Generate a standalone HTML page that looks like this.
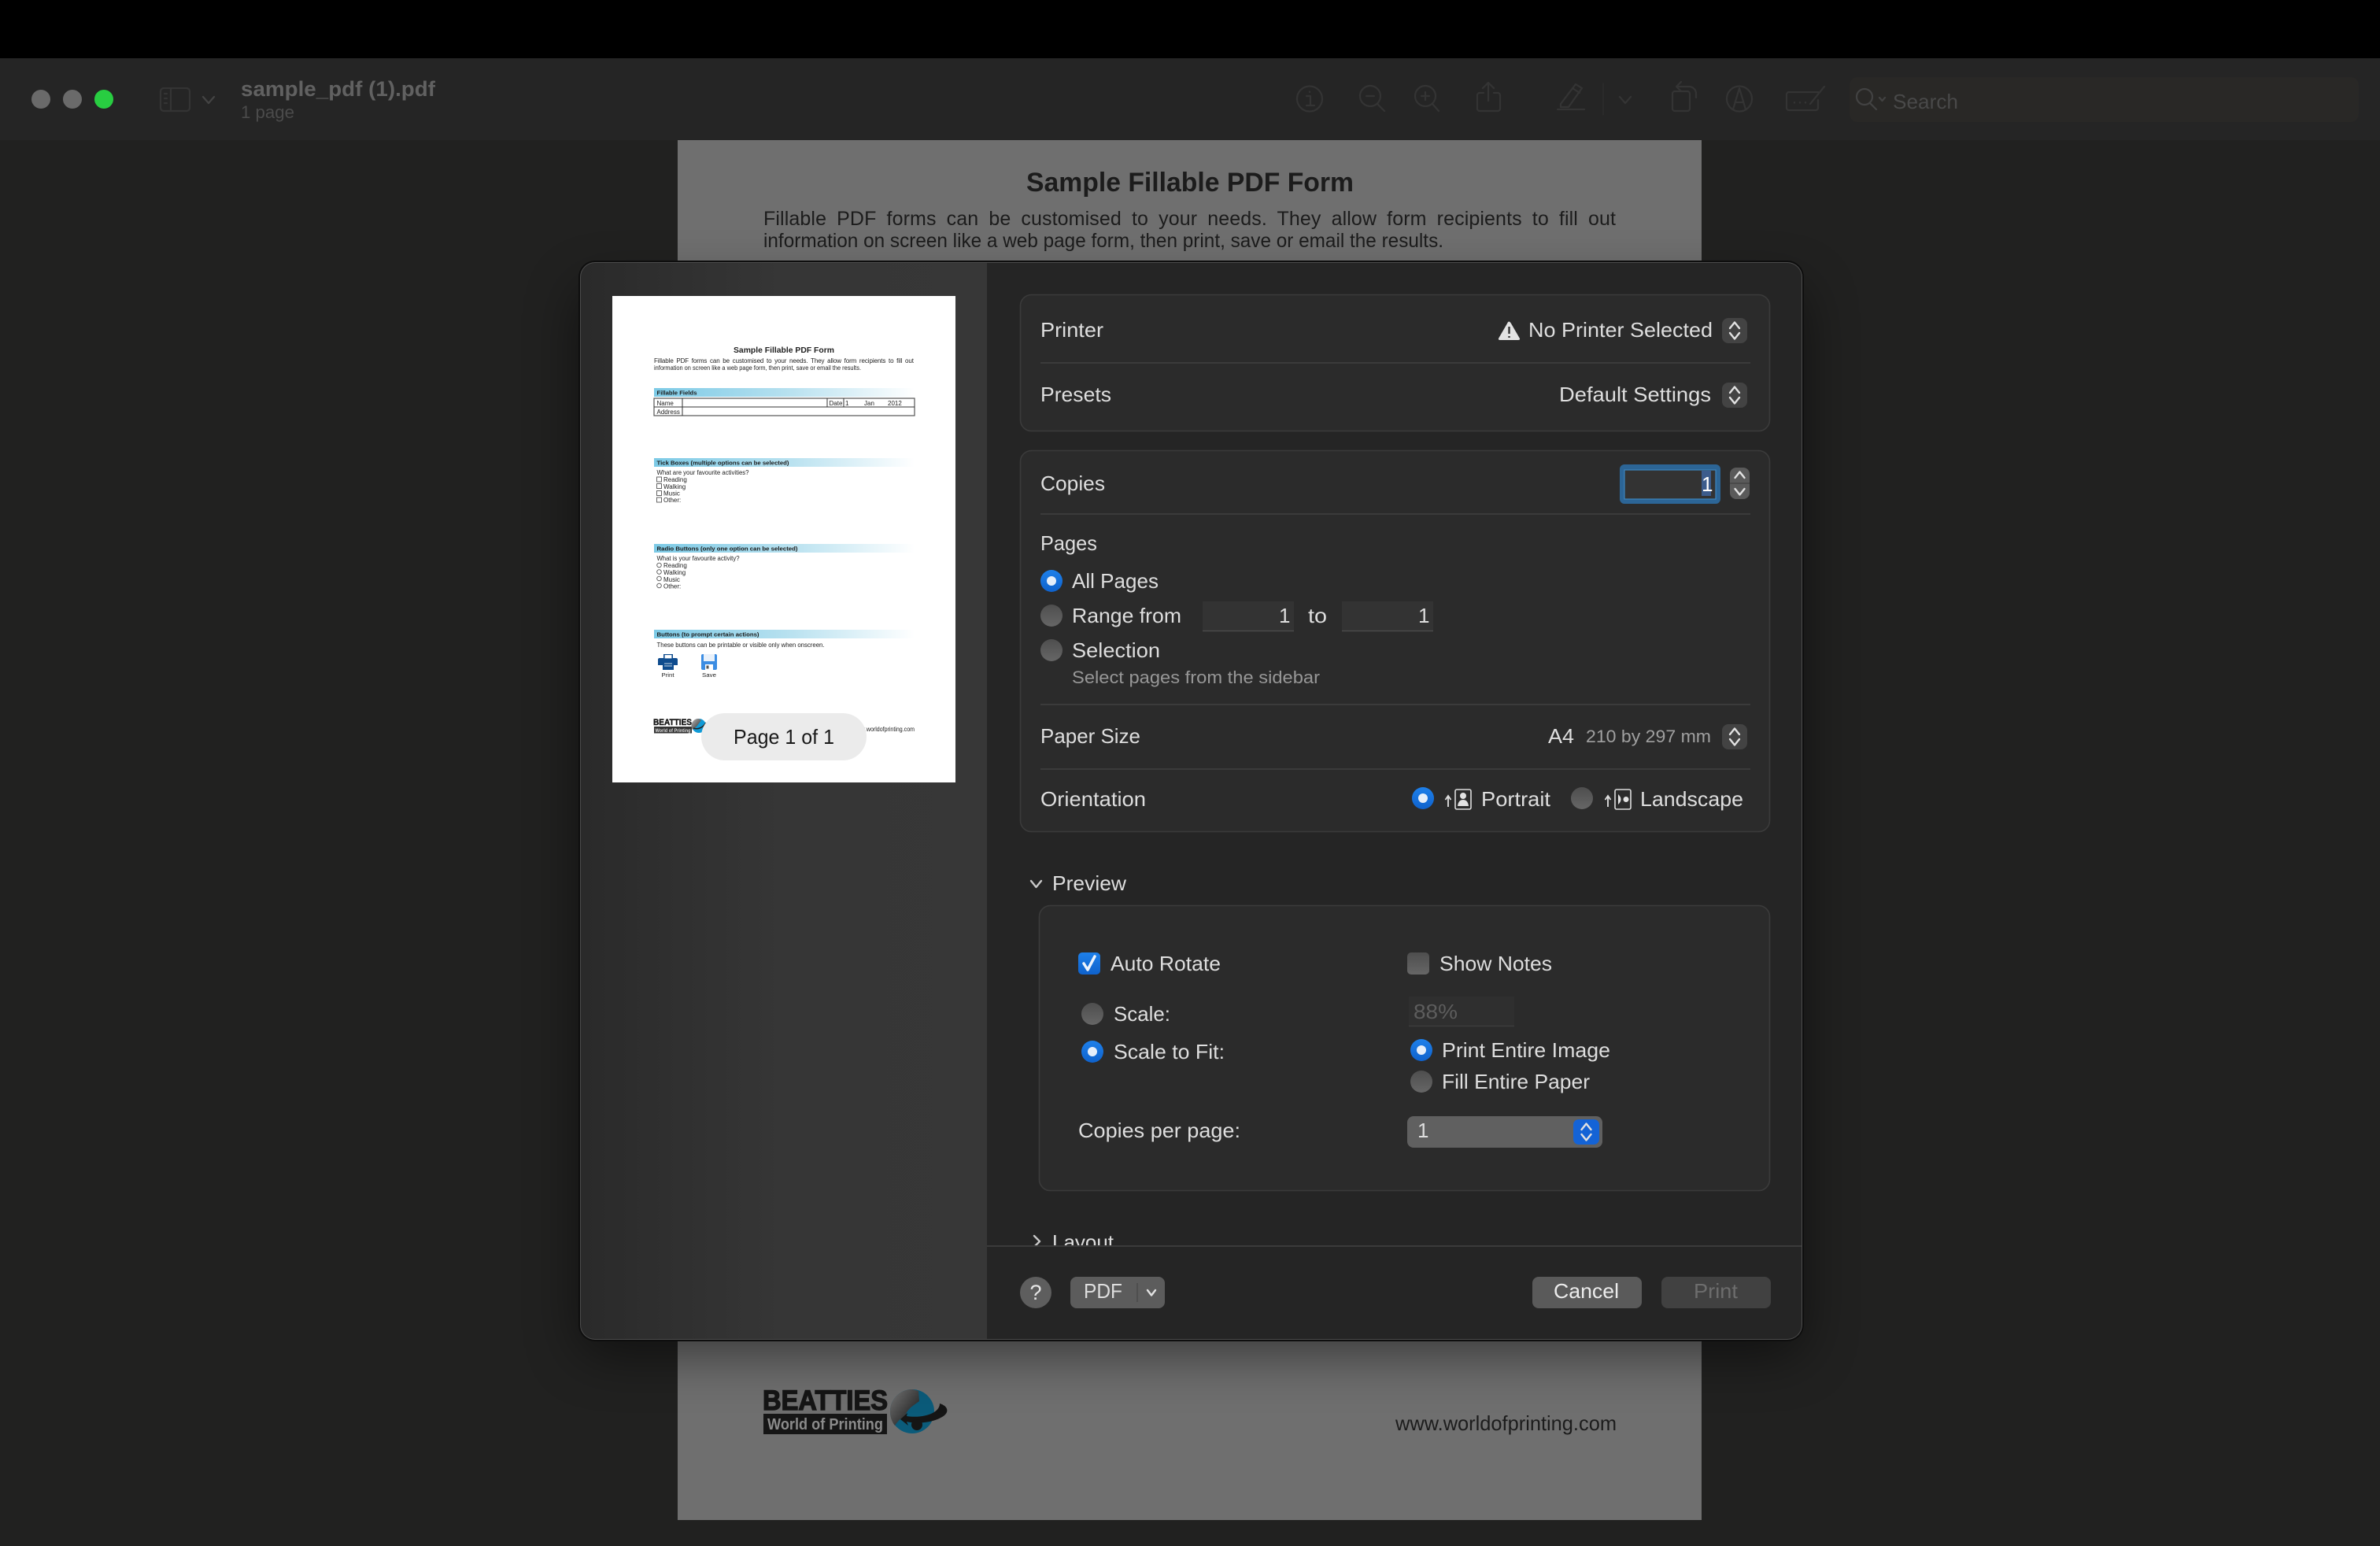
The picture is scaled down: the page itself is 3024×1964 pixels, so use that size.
<!DOCTYPE html>
<html><head><meta charset="utf-8"><title>Print</title>
<style>
html,body{margin:0;padding:0;background:#212120;width:3024px;height:1964px;overflow:hidden}
svg{display:block}
text{font-family:"Liberation Sans",sans-serif;fill:#dedede;font-size:26px}
.g{fill:#979797;font-size:22px}
.p{fill:#1c1c1c}
.m{fill:#222;font-size:8px}
.b{font-weight:bold;fill:#1c1c1c;font-size:7.6px}
.ic{fill:none;stroke:#343434;stroke-width:2.2;stroke-linecap:round;stroke-linejoin:round}
.ch{fill:none;stroke:#e2e2e2;stroke-width:2.4;stroke-linecap:round;stroke-linejoin:round}
.f{fill:#333;stroke:none}
</style></head><body>
<svg width="3024" height="1964" viewBox="0 0 3024 1964" xmlns="http://www.w3.org/2000/svg">
<defs>
<linearGradient id="sb" x1="0" x2="1" y1="0" y2="0"><stop offset="0" stop-color="#2a2a2a"/><stop offset=".25" stop-color="#303030"/><stop offset=".5" stop-color="#363636"/><stop offset="1" stop-color="#373737"/></linearGradient>
<linearGradient id="sec" x1="0" x2="1" y1="0" y2="0"><stop offset="0" stop-color="#7ccae6"/><stop offset=".5" stop-color="#b5e0ef"/><stop offset="1" stop-color="#fff"/></linearGradient>
<linearGradient id="rb" x1="0" x2="0" y1="0" y2="1"><stop offset="0" stop-color="#1e80ea"/><stop offset="1" stop-color="#0f62cc"/></linearGradient>
<linearGradient id="rg" x1="0" x2="0" y1="0" y2="1"><stop offset="0" stop-color="#4e4e4e"/><stop offset="1" stop-color="#666"/></linearGradient>
<linearGradient id="gl" x1="0" x2="1" y1="0" y2="1"><stop offset="0" stop-color="#bbb"/><stop offset="1" stop-color="#222"/></linearGradient>
<linearGradient id="gd" x1="0" x2="1" y1="0" y2="1"><stop offset="0" stop-color="#777"/><stop offset="1" stop-color="#111"/></linearGradient>
<filter id="sh" x="-20%" y="-20%" width="140%" height="140%"><feGaussianBlur stdDeviation="34"/></filter>
<clipPath id="cl"><rect x="1254" y="340" width="1030" height="1243"/></clipPath>
<clipPath id="dc"><rect x="738" y="334" width="1551" height="1367" rx="18"/></clipPath>
<g id="st"><path class="ch" d="M-6,-3 L0,-10.500 L6,-3"/><path class="ch" d="M-6,3 L0,10.500 L6,3"/></g>
<g id="ron"><circle r="14" fill="url(#rb)"/><circle r="6" fill="#e6effa"/></g>
<g id="rof"><circle r="14" fill="url(#rg)"/></g>
</defs>

<rect width="3024" height="1964" fill="#212120"/>
<rect width="3024" height="74" fill="#000"/>
<rect y="74" width="3024" height="104" fill="#252525"/>

<!-- traffic lights -->
<circle cx="52" cy="126" r="12" fill="#6a6a6a"/>
<circle cx="92" cy="126" r="12" fill="#6a6a6a"/>
<circle cx="132" cy="126" r="12" fill="#28cd41"/>
<!-- sidebar icon -->
<g class="ic"><rect x="204" y="112" width="37" height="29" rx="4"/><path d="M217,112V141M209,119H212M209,125H212M209,131H212"/><path d="M258,123L265,131L272,123" style="stroke:#444"/></g>
<text x="306" y="122" font-weight="bold" textLength="247" lengthAdjust="spacingAndGlyphs" style="fill:#616161;font-size:27px">sample_pdf (1).pdf</text>
<text x="306" y="150" textLength="68" lengthAdjust="spacingAndGlyphs" style="fill:#4b4b4b;font-size:22px">1 page</text>

<!-- toolbar icons -->
<g class="ic">
<circle cx="1664" cy="125.5" r="16"/><path d="M1660,122H1665V134M1660,134H1670M1664,116.500V117"/>
<circle cx="1741" cy="122" r="13"/><path d="M1750,132L1759,141M1736,122H1746"/>
<circle cx="1811" cy="122" r="13"/><path d="M1820,132L1828,141M1806,122H1816M1811,117V127"/>
<path d="M1885,118H1880A3,3 0 0 0 1877,121V138A3,3 0 0 0 1880,141H1903A3,3 0 0 0 1906,138V121A3,3 0 0 0 1903,118H1898M1891,128V106M1884,112L1891,105L1898,112"/>
<path d="M1983,132L2002,107L2010,112L1993,136L1983,136ZM1998,112L2007,118"/><path d="M1979,139H2013"/>
<path d="M2037,106V146" stroke-width="1.2" style="stroke:#2e2e2e"/>
<path d="M2058,123L2065,131L2072,123"/>
<rect x="2125" y="116" width="22" height="25" rx="3"/><path d="M2130,110H2146A9,9 0 0 1 2155,119V124M2136,104L2130,110L2136,116"/>
<circle cx="2210" cy="125.5" r="16"/><path d="M2202,139L2210,112L2218,139M2205,130H2215"/>
<path d="M2310,117H2273A3,3 0 0 0 2270,120V137A3,3 0 0 0 2273,140H2307A3,3 0 0 0 2310,137V127M2280,130V130.500M2287,130V130.500M2294,130V130.500M2300,132L2318,110"/>
</g>
<rect x="2350" y="98" width="647" height="57" rx="10" fill="#292826"/>
<g class="ic" style="stroke:#424242"><circle cx="2369" cy="123" r="10"/><path d="M2376,131L2384,139M2388,124L2391.500,128L2395,124"/></g>
<text x="2405" y="138" textLength="83" lengthAdjust="spacingAndGlyphs" style="fill:#494949;font-size:26px">Search</text>

<!-- background PDF page -->
<rect x="861" y="178" width="1301" height="1753" fill="#6f6f6f"/>
<text x="1304" y="243" font-weight="bold" textLength="416" lengthAdjust="spacingAndGlyphs" class="p" style="font-size:34px">Sample Fillable PDF Form</text>
<text x="970" y="286" textLength="1083" class="p" style="font-size:25px;word-spacing:6px">Fillable PDF forms can be customised to your needs. They allow form recipients to fill out</text>
<text x="970" y="314" textLength="864" lengthAdjust="spacingAndGlyphs" class="p" style="font-size:25px">information on screen like a web page form, then print, save or email the results.</text>
<!-- logo large -->
<text x="969" y="1791" font-weight="bold" textLength="159" lengthAdjust="spacingAndGlyphs" style="fill:#151515;font-size:35px;stroke:#151515;stroke-width:1.4">BEATTIES</text>
<rect x="970" y="1796" width="157" height="26" fill="#161616"/>
<text x="975" y="1816" font-weight="bold" textLength="147" lengthAdjust="spacingAndGlyphs" style="fill:#8b8b8b;font-size:20px">World of Printing</text>
<circle cx="1159" cy="1793" r="28" fill="#0b5b7a"/>
<path d="M1159,1765A28,28 0 0 0 1131,1793C1131,1800 1133,1806 1137,1811C1140,1806 1146,1800 1150,1800C1152,1790 1160,1786 1168,1780L1167,1767Z" fill="url(#gd)"/>
<path d="M1144,1803L1153,1795L1152,1799C1172,1802 1194,1796 1194,1783C1204,1786 1206,1793 1200,1798C1190,1806 1168,1810 1152,1806L1154,1811Z" fill="#151515"/>
<circle cx="1165" cy="1810" r="7" fill="#151515"/>
<text x="1773" y="1817" textLength="281" lengthAdjust="spacingAndGlyphs" class="p" style="font-size:26px">www.worldofprinting.com</text>

<!-- dialog shadow -->
<rect x="737" y="367" width="1553" height="1353" rx="20" fill="#000" opacity=".5" filter="url(#sh)"/>
<rect x="735" y="331" width="1557" height="1373" rx="21" fill="#0e0e0e"/>
<rect x="737" y="333" width="1553" height="1369" rx="19" fill="#4c4c4c"/>
<g clip-path="url(#dc)">
<rect x="738" y="334" width="516" height="1367" fill="url(#sb)"/>
<rect x="1254" y="334" width="1036" height="1367" fill="#252525"/>
</g>

<!-- sidebar preview page -->
<rect x="778" y="376" width="436" height="618" fill="#fff"/>
<text x="932" y="448" font-weight="bold" textLength="128" lengthAdjust="spacingAndGlyphs" style="fill:#222;font-size:10.500px">Sample Fillable PDF Form</text>
<text x="831" y="461" textLength="330" class="m" style="word-spacing:1.500px">Fillable PDF forms can be customised to your needs. They allow form recipients to fill out</text>
<text x="831" y="470" textLength="263" lengthAdjust="spacingAndGlyphs" class="m">information on screen like a web page form, then print, save or email the results.</text>

<rect x="831" y="493" width="331" height="11" fill="url(#sec)"/>
<text x="834.500" y="501.500" textLength="51" lengthAdjust="spacingAndGlyphs" class="b">Fillable Fields</text>
<rect x="831" y="506" width="331" height="22" fill="#fff" stroke="#555" stroke-width="1.2"/>
<path d="M831,517H1162M867,506V528M1051,506V517M1072,506V517" stroke="#333" stroke-width="1" fill="none"/>
<g class="m" style="font-size:8px">
<text x="834.500" y="515" class="m">Name</text><text x="834.500" y="526" class="m">Address</text>
<text x="1053.500" y="515" class="m">Date</text><text x="1074" y="515" class="m">1</text><text x="1098" y="515" class="m">Jan</text><text x="1128" y="515" class="m">2012</text>
</g>

<rect x="831" y="582" width="331" height="11" fill="url(#sec)"/>
<text x="834.500" y="590.500" textLength="168" lengthAdjust="spacingAndGlyphs" class="b">Tick Boxes (multiple options can be selected)</text>
<text x="834.500" y="603" textLength="117" lengthAdjust="spacingAndGlyphs" class="m">What are your favourite activities?</text>
<g fill="none" stroke="#555" stroke-width=".9"><rect x="834.500" y="606" width="6" height="6"/><rect x="834.500" y="614.500" width="6" height="6"/><rect x="834.500" y="623.500" width="6" height="6"/><rect x="834.500" y="632" width="6" height="6"/></g>
<text x="843" y="612" class="m">Reading</text><text x="843" y="621" class="m">Walking</text><text x="843" y="629.500" class="m">Music</text><text x="843" y="638" class="m">Other:</text>

<rect x="831" y="691" width="331" height="11" fill="url(#sec)"/>
<text x="834.500" y="699.500" textLength="179" lengthAdjust="spacingAndGlyphs" class="b">Radio Buttons (only one option can be selected)</text>
<text x="834.500" y="712" textLength="105" lengthAdjust="spacingAndGlyphs" class="m">What is your favourite activity?</text>
<g fill="none" stroke="#555" stroke-width=".9"><circle cx="837.500" cy="718" r="2.800"/><circle cx="837.500" cy="726.500" r="2.800"/><circle cx="837.500" cy="735" r="2.800"/><circle cx="837.500" cy="744" r="2.800"/></g>
<text x="843" y="721" class="m">Reading</text><text x="843" y="730" class="m">Walking</text><text x="843" y="739" class="m">Music</text><text x="843" y="747.500" class="m">Other:</text>

<rect x="831" y="800" width="331" height="11" fill="url(#sec)"/>
<text x="834.500" y="808.500" textLength="130" lengthAdjust="spacingAndGlyphs" class="b">Buttons (to prompt certain actions)</text>
<text x="834.500" y="822" textLength="213" lengthAdjust="spacingAndGlyphs" class="m">These buttons can be printable or visible only when onscreen.</text>
<path d="M843,836V831H855V836H859A2,2 0 0 1 861,838V845H856V851H842V845H836V838A2,2 0 0 1 838,836Z" fill="#0f4c8e"/>
<path d="M845,832.500H853V836H845ZM844,843H854M844,846H854" stroke="#fff" stroke-width=".8" fill="#fff"/>
<rect x="891" y="831" width="20" height="20" rx="2" fill="#3c8de3"/><rect x="894" y="831" width="14" height="9" fill="#e9f1fa"/><rect x="896" y="844" width="10" height="7" fill="#fff"/><rect x="897.500" y="845.500" width="3" height="4" fill="#555"/>
<text x="840.500" y="860" textLength="16" lengthAdjust="spacingAndGlyphs" class="m" style="font-size:7.500px">Print</text>
<text x="892" y="860" textLength="18" lengthAdjust="spacingAndGlyphs" class="m" style="font-size:7.500px">Save</text>

<text x="830" y="921" font-weight="bold" textLength="49" lengthAdjust="spacingAndGlyphs" style="fill:#151515;font-size:11px;stroke:#151515;stroke-width:.4">BEATTIES</text>
<rect x="831" y="923" width="48" height="8.500" fill="#333"/>
<text x="832.500" y="930" font-weight="bold" textLength="45" lengthAdjust="spacingAndGlyphs" style="fill:#ddd;font-size:6.500px">World of Printing</text>
<circle cx="888" cy="922" r="9" fill="#109ad6"/>
<path d="M888,913A9,9 0 0 0 880,927L885,923L891,915Z" fill="url(#gl)"/>
<path d="M881,925C886,927 893,925 897,918" stroke="#222" stroke-width="1.500" fill="none"/>
<text x="1084" y="929" textLength="78" lengthAdjust="spacingAndGlyphs" class="m">www.worldofprinting.com</text>
<rect x="891" y="906" width="210" height="60" rx="30" fill="#ebebeb"/>
<text x="932" y="945" textLength="128" lengthAdjust="spacingAndGlyphs" style="fill:#1a1a1a;font-size:26px">Page 1 of 1</text>

<!-- Box 1 -->
<rect x="1296.500" y="374.500" width="952" height="173" rx="14" fill="#2b2b2b" stroke="#3b3b3b" stroke-width="1.600"/>
<text x="1322" y="428" textLength="80" lengthAdjust="spacingAndGlyphs">Printer</text>
<path d="M1322,461H2224" stroke="#3b3b3b" stroke-width="2"/>
<path d="M1917.500,408.500Q1919,409 1920,411L1931,430Q1931.500,432 1929,432H1906Q1903.500,432 1904,430L1915,411Q1916,408.500 1917.500,408.500Z" fill="#e3e3e3"/>
<path d="M1917.500,415V424M1917.500,427V429" stroke="#2b2b2b" stroke-width="2.300"/>
<text x="1942" y="428" textLength="234" lengthAdjust="spacingAndGlyphs">No Printer Selected</text>
<rect x="2188" y="404" width="32" height="32" rx="8" fill="#434343"/><use href="#st" transform="translate(2204,420)"/>
<text x="1322" y="510" textLength="90" lengthAdjust="spacingAndGlyphs">Presets</text>
<text x="1981" y="510" textLength="193" lengthAdjust="spacingAndGlyphs">Default Settings</text>
<rect x="2188" y="486" width="32" height="32" rx="8" fill="#434343"/><use href="#st" transform="translate(2204,502)"/>

<!-- Box 2 -->
<rect x="1296.500" y="572.500" width="952" height="484" rx="14" fill="#2b2b2b" stroke="#3b3b3b" stroke-width="1.600"/>
<text x="1322" y="623" textLength="82" lengthAdjust="spacingAndGlyphs">Copies</text>
<rect x="2058" y="590" width="128" height="50" rx="6" fill="#2c6596"/>
<rect x="2064" y="597" width="116" height="37" fill="#333" stroke="#3d86bd" stroke-width="1.200"/>
<rect x="2162" y="598" width="12" height="32" fill="#3c5c8c"/>
<text x="2162" y="624" style="fill:#fff">1</text>
<rect x="2198" y="594" width="25" height="40" rx="8" fill="#5a5a5a"/>
<path d="M2198,614H2223" stroke="#444" stroke-width="1.500"/>
<path class="ch" d="M2204.500,607L2210.500,599.500L2216.500,607M2204.500,621L2210.500,628.500L2216.500,621"/>
<path d="M1322,653H2224" stroke="#3b3b3b" stroke-width="2"/>
<text x="1322" y="699" textLength="72" lengthAdjust="spacingAndGlyphs">Pages</text>

<use href="#ron" transform="translate(1336,738)"/>
<text x="1362" y="747" textLength="110" lengthAdjust="spacingAndGlyphs">All Pages</text>
<use href="#rof" transform="translate(1336,782)"/>
<text x="1362" y="791" textLength="139" lengthAdjust="spacingAndGlyphs">Range from</text>
<rect x="1528" y="764" width="116" height="38" fill="#333"/><path d="M1528,801.500H1644" stroke="#4a4a4a" stroke-width="1.500"/>
<text x="1625" y="791">1</text>
<text x="1662" y="791" textLength="24" lengthAdjust="spacingAndGlyphs">to</text>
<rect x="1705" y="764" width="116" height="38" fill="#333"/><path d="M1705,801.500H1821" stroke="#4a4a4a" stroke-width="1.500"/>
<text x="1802" y="791">1</text>
<use href="#rof" transform="translate(1336,826)"/>
<text x="1362" y="835" textLength="112" lengthAdjust="spacingAndGlyphs">Selection</text>
<text x="1362" y="868" textLength="315" lengthAdjust="spacingAndGlyphs" class="g">Select pages from the sidebar</text>
<path d="M1322,895H2224" stroke="#3b3b3b" stroke-width="2"/>
<text x="1322" y="944" textLength="127" lengthAdjust="spacingAndGlyphs">Paper Size</text>
<text x="1967" y="944" textLength="33" lengthAdjust="spacingAndGlyphs">A4</text>
<text x="2015" y="943" textLength="159" lengthAdjust="spacingAndGlyphs" class="g" style="fill:#a0a0a0">210 by 297 mm</text>
<rect x="2188" y="920" width="32" height="32" rx="8" fill="#434343"/><use href="#st" transform="translate(2204,936)"/>
<path d="M1322,977H2224" stroke="#3b3b3b" stroke-width="2"/>
<text x="1322" y="1024" textLength="134" lengthAdjust="spacingAndGlyphs">Orientation</text>
<use href="#ron" transform="translate(1808,1014)"/>
<path d="M1840,1025V1013M1836.500,1016L1840,1011L1843.500,1016" stroke="#e2e2e2" stroke-width="1.800" fill="none"/>
<rect x="1849" y="1003" width="20" height="25" rx="2" fill="none" stroke="#dcdcdc" stroke-width="1.600"/>
<circle cx="1859" cy="1011" r="4" fill="#e2e2e2"/><path d="M1852,1024Q1853,1016 1859,1016Q1865,1016 1866,1024Z" fill="#e2e2e2"/>
<text x="1882" y="1024" textLength="88" lengthAdjust="spacingAndGlyphs">Portrait</text>
<use href="#rof" transform="translate(2010,1014)"/>
<path d="M2043,1025V1013M2039.500,1016L2043,1011L2046.500,1016" stroke="#e2e2e2" stroke-width="1.800" fill="none"/>
<rect x="2052" y="1003" width="20" height="25" rx="2" fill="none" stroke="#dcdcdc" stroke-width="1.600"/>
<circle cx="2066" cy="1015.500" r="3.500" fill="#e2e2e2"/><path d="M2056,1009Q2063,1015.500 2056,1022Z" fill="#e2e2e2"/>
<text x="2084" y="1024" textLength="131" lengthAdjust="spacingAndGlyphs">Landscape</text>

<!-- Preview section -->
<path class="ch" d="M1310,1119L1316.500,1127L1323,1119" style="stroke:#c8c8c8"/>
<text x="1337" y="1131" textLength="94" lengthAdjust="spacingAndGlyphs">Preview</text>

<!-- Box 3 -->
<rect x="1320.500" y="1150.500" width="928" height="362" rx="14" fill="#2b2b2b" stroke="#3b3b3b" stroke-width="1.600"/>
<rect x="1370" y="1210" width="28" height="28" rx="5" fill="url(#rb)"/>
<path d="M1377,1224L1382,1232L1391,1215" fill="none" stroke="#eef4fc" stroke-width="3.500" stroke-linecap="round" stroke-linejoin="round"/>
<text x="1411" y="1233" textLength="140" lengthAdjust="spacingAndGlyphs">Auto Rotate</text>
<rect x="1788" y="1210" width="28" height="28" rx="5" fill="url(#rg)"/>
<text x="1829" y="1233" textLength="143" lengthAdjust="spacingAndGlyphs">Show Notes</text>

<use href="#rof" transform="translate(1388,1288)"/>
<text x="1415" y="1297" textLength="72" lengthAdjust="spacingAndGlyphs">Scale:</text>
<rect x="1790" y="1266" width="134" height="38" fill="#2f2f2f"/><path d="M1790,1303.500H1924" stroke="#3c3c3c" stroke-width="1.500"/>
<text x="1796" y="1294" textLength="56" lengthAdjust="spacingAndGlyphs" style="fill:#5d5d5d">88%</text>
<use href="#ron" transform="translate(1388,1336)"/>
<text x="1415" y="1345" textLength="141" lengthAdjust="spacingAndGlyphs">Scale to Fit:</text>
<use href="#ron" transform="translate(1806,1334)"/>
<text x="1832" y="1343" textLength="214" lengthAdjust="spacingAndGlyphs">Print Entire Image</text>
<use href="#rof" transform="translate(1806,1374)"/>
<text x="1832" y="1383" textLength="188" lengthAdjust="spacingAndGlyphs">Fill Entire Paper</text>
<text x="1370" y="1445" textLength="206" lengthAdjust="spacingAndGlyphs">Copies per page:</text>
<rect x="1788" y="1418" width="248" height="40" rx="8" fill="#606060"/>
<text x="1801" y="1445">1</text>
<rect x="1999" y="1422" width="33" height="32" rx="7" fill="#1463d6"/>
<use href="#st" transform="translate(2015.500,1438)"/>

<!-- Layout (clipped) -->
<g clip-path="url(#cl)">
<path class="ch" d="M1314,1570L1321,1577L1314,1584" style="stroke:#c8c8c8"/>
<text x="1337" y="1587" textLength="78" lengthAdjust="spacingAndGlyphs">Layout</text>
</g>
<rect x="1254" y="1582" width="1035" height="2" fill="#3b3b3b"/>

<!-- Bottom bar -->
<circle cx="1316" cy="1642" r="20" fill="#5e5e5e"/>
<text x="1316" y="1651" text-anchor="middle" style="fill:#e6e6e6;font-size:27px">?</text>
<rect x="1360" y="1622" width="120" height="40" rx="8" fill="#5c5c5c"/>
<text x="1377" y="1649" textLength="49" lengthAdjust="spacingAndGlyphs">PDF</text>
<path d="M1445,1630V1654" stroke="#4a4a4a" stroke-width="1.500"/>
<path class="ch" d="M1458,1639L1463,1645.500L1468,1639"/>
<rect x="1947" y="1622" width="139" height="40" rx="8" fill="#5a5a5a"/>
<text x="1974" y="1649" textLength="83" lengthAdjust="spacingAndGlyphs" style="fill:#ececec">Cancel</text>
<rect x="2111" y="1622" width="139" height="40" rx="8" fill="#414141"/>
<text x="2152" y="1649" textLength="56" lengthAdjust="spacingAndGlyphs" style="fill:#6d6d6d">Print</text>
</svg>
</body></html>
